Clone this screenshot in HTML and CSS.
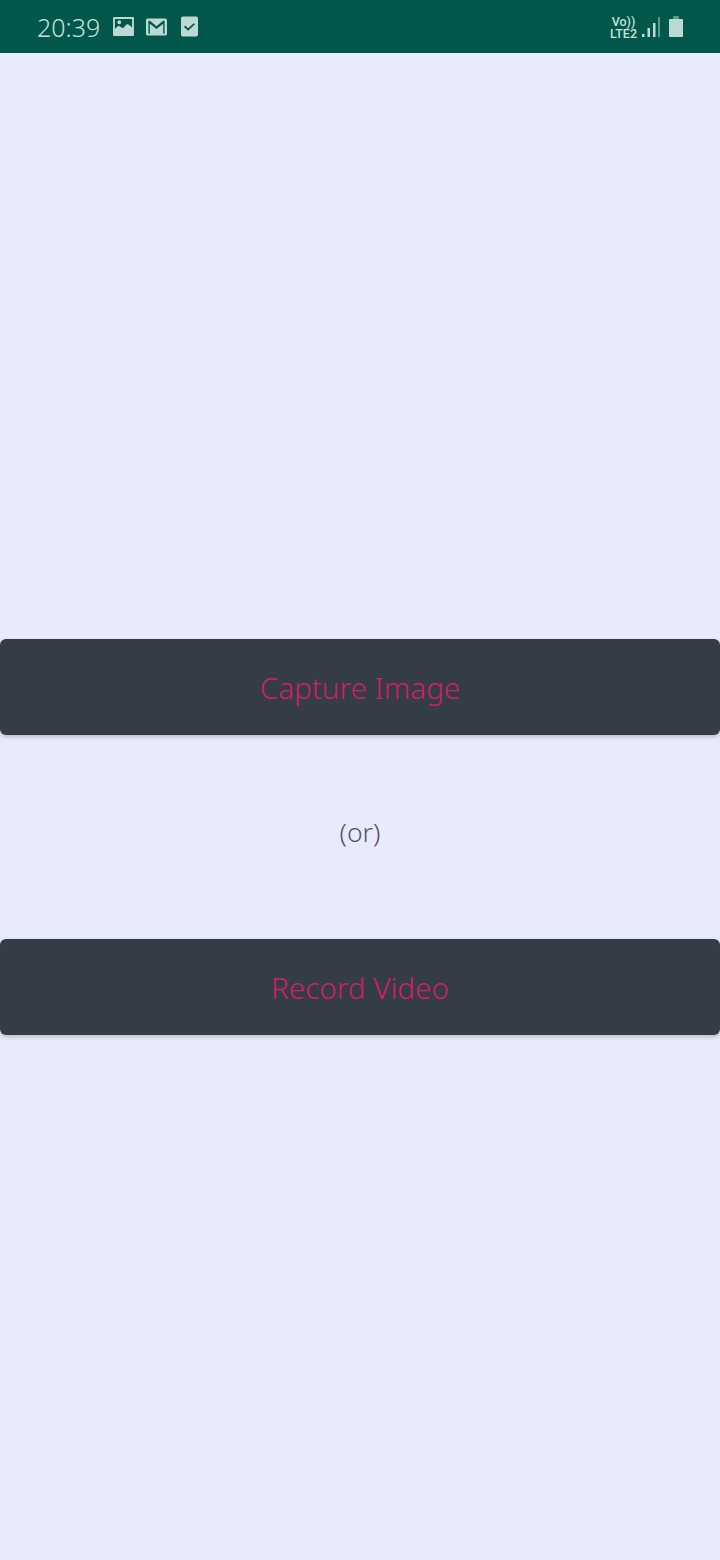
FILE: index.html
```html
<!DOCTYPE html>
<html lang="en">
<head>
<meta charset="utf-8">
<title>Capture</title>
<link rel="stylesheet" href="styles.css">
</head>
<body>
<header class="status">
  <div class="status-left">
    <span class="time">20:39</span>
    <svg class="ic ic-img" viewBox="0 0 22 20"><path fill-rule="evenodd" d="M1 0h20a1 1 0 0 1 1 1v18a1 1 0 0 1-1 1H1a1 1 0 0 1-1-1V1a1 1 0 0 1 1-1zM2 2v10.500c2-2 3-3 4-3 1.500 0 2.500 2 4 2 2 0 3-4 5-4 1.500 0 3 1.500 5 3.500V2zM6.500 3.500a2 2 0 1 1 0 4 2 2 0 0 1 0-4z"/></svg>
    <svg class="ic ic-mail" viewBox="0 0 22 18"><path fill-rule="evenodd" d="M2 0h18a2 2 0 0 1 2 2v14a2 2 0 0 1-2 2H2a2 2 0 0 1-2-2V2a2 2 0 0 1 2-2zM2.500 2.500V16h1.500V5.500L11 11l7-5.500V16h1.500V2.500h-1.700L11 8.200 4.200 2.500z"/></svg>
    <svg class="ic ic-check" viewBox="0 0 18 21"><path fill-rule="evenodd" d="M2 0h14a2 2 0 0 1 2 2v17a2 2 0 0 1-2 2H2a2 2 0 0 1-2-2V2a2 2 0 0 1 2-2zM4.500 9.500 3.200 11l4.300 4 7.300-6.800L13.500 7l-6 5.300z"/></svg>
  </div>
  <div class="status-right">
    <div class="net"><span>Vo))</span><span>LTE2</span></div>
    <svg class="ic ic-signal" viewBox="0 0 18 20"><rect x="0" y="17" width="2.500" height="3"/><rect x="5.500" y="11" width="2.500" height="9"/><rect x="11" y="6" width="2.500" height="14"/><rect class="dim" x="16" y="0" width="2" height="20"/></svg>
    <svg class="ic ic-batt" viewBox="0 0 14 21"><path class="dim" d="M4 1a1 1 0 0 1 1-1h4a1 1 0 0 1 1 1v3H4z"/><path d="M1 3h12a1 1 0 0 1 1 1v16a1 1 0 0 1-1 1H1a1 1 0 0 1-1-1V4a1 1 0 0 1 1-1z"/></svg>
  </div>
</header>
<main class="main">
  <button class="action" type="button">Capture Image</button>
  <p class="or">(or)</p>
  <button class="action" type="button">Record Video</button>
</main>
</body>
</html>
```
FILE: styles.css
```css
* { box-sizing: border-box; }
html, body { margin: 0; padding: 0; }
body {
  width: 720px;
  height: 1560px;
  background: #e8ebf9;
  font-family: "Noto Sans", "Open Sans", sans-serif;
  overflow: hidden;
}
.status {
  height: 53px;
  background: #02574b;
  color: #c6e1db;
  display: flex;
  justify-content: space-between;
  align-items: center;
  padding: 0 37px 0 37px;
}
.status-left { display: flex; align-items: center; }
.status-right { display: flex; align-items: center; }
.time { font-size: 25px; line-height: 30px; width: 76px; font-weight: 300; }
.ic { display: block; fill: #bcd9d3; }
.ic-img { width: 21px; height: 19px; margin-right: 12px; }
.ic-mail { width: 21px; height: 18px; margin-right: 14px; }
.ic-check { width: 17px; height: 21px; }
.net {
  display: flex;
  flex-direction: column;
  align-items: center;
  font-family: Roboto, sans-serif;
  font-size: 12.500px;
  font-weight: 500;
  line-height: 12px;
  margin-right: 5px;
  margin-top: 2px;
}
.ic-signal { width: 18px; height: 20px; margin-right: 9px; margin-top: 1px; }
.ic-signal .dim, .ic-batt .dim { opacity: 0.5; }
.ic-batt { width: 14px; height: 21px; }
.main {
  display: flex;
  flex-direction: column;
  padding-top: 586px;
}
.action {
  display: block;
  width: 100%;
  height: 96px;
  border: 0;
  border-radius: 6px;
  background: #343c48;
  color: #d02063;
  font-family: inherit;
  font-size: 29.600px;
  font-weight: 300;
  box-shadow: 0 2px 4px rgba(0,0,0,0.2);
  padding: 0;
}
.or {
  margin: 0;
  height: 204px;
  display: flex;
  align-items: center;
  justify-content: center;
  color: #4d5370;
  font-size: 26.500px;
  font-weight: 300;
  padding-bottom: 10px;
}
```
